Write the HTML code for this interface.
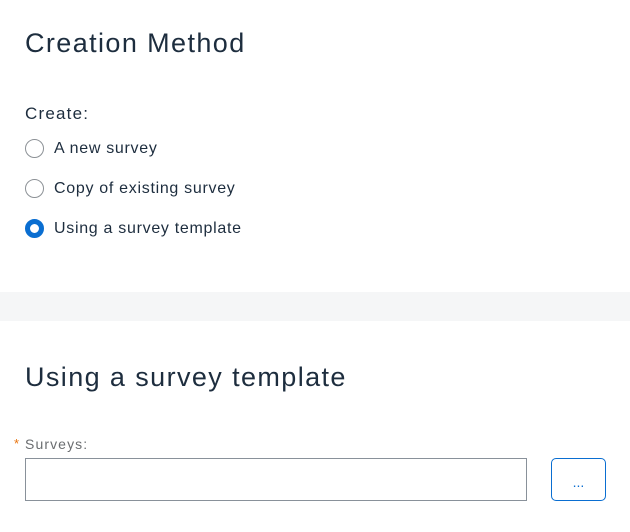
<!DOCTYPE html>
<html><head><style>
*{margin:0;padding:0;box-sizing:border-box}
body{width:630px;height:532px;background:#fff;font-family:"Liberation Sans",sans-serif;color:#32363a;position:relative;overflow:hidden}
.h{position:absolute;left:25px;font-size:27px;color:#1d2d3e;letter-spacing:1.4px}
.t{position:absolute;font-size:16px;color:#1d2d3e;letter-spacing:0.7px}
.r{position:absolute;left:25px;width:19px;height:19px;border-radius:50%;border:1px solid #8c9196;background:#fff}
.r.on{border:5px solid #0a6ed1;background:#fff}
</style></head><body>
<div class="h" style="top:28px">Creation Method</div>
<div class="t" style="left:25px;top:104px;font-size:17px;letter-spacing:1.2px">Create:</div>
<div class="r" style="top:139px"></div><div class="t" style="left:54px;top:140px">A new survey</div>
<div class="r" style="top:179px"></div><div class="t" style="left:54px;top:180px">Copy of existing survey</div>
<div class="r on" style="top:219px"></div><div class="t" style="left:54px;top:220px">Using a survey template</div>
<div style="position:absolute;left:0;top:292px;width:630px;height:29px;background:#f5f6f7"></div>
<div class="h" style="top:362px">Using a survey template</div>
<div style="position:absolute;left:14px;top:436px;font-size:13px;color:#e9730c">*</div>
<div style="position:absolute;left:25px;top:436px;font-size:14px;color:#6a6d70;letter-spacing:1.1px">Surveys:</div>
<div style="position:absolute;left:25px;top:458px;width:502px;height:43px;border:1px solid #89919a"></div>
<div style="position:absolute;left:551px;top:458px;width:55px;height:43px;border:1px solid #0a6ed1;border-radius:5px;color:#0a6ed1;text-align:center;font-size:14px;line-height:46px">...</div>
</body></html>
